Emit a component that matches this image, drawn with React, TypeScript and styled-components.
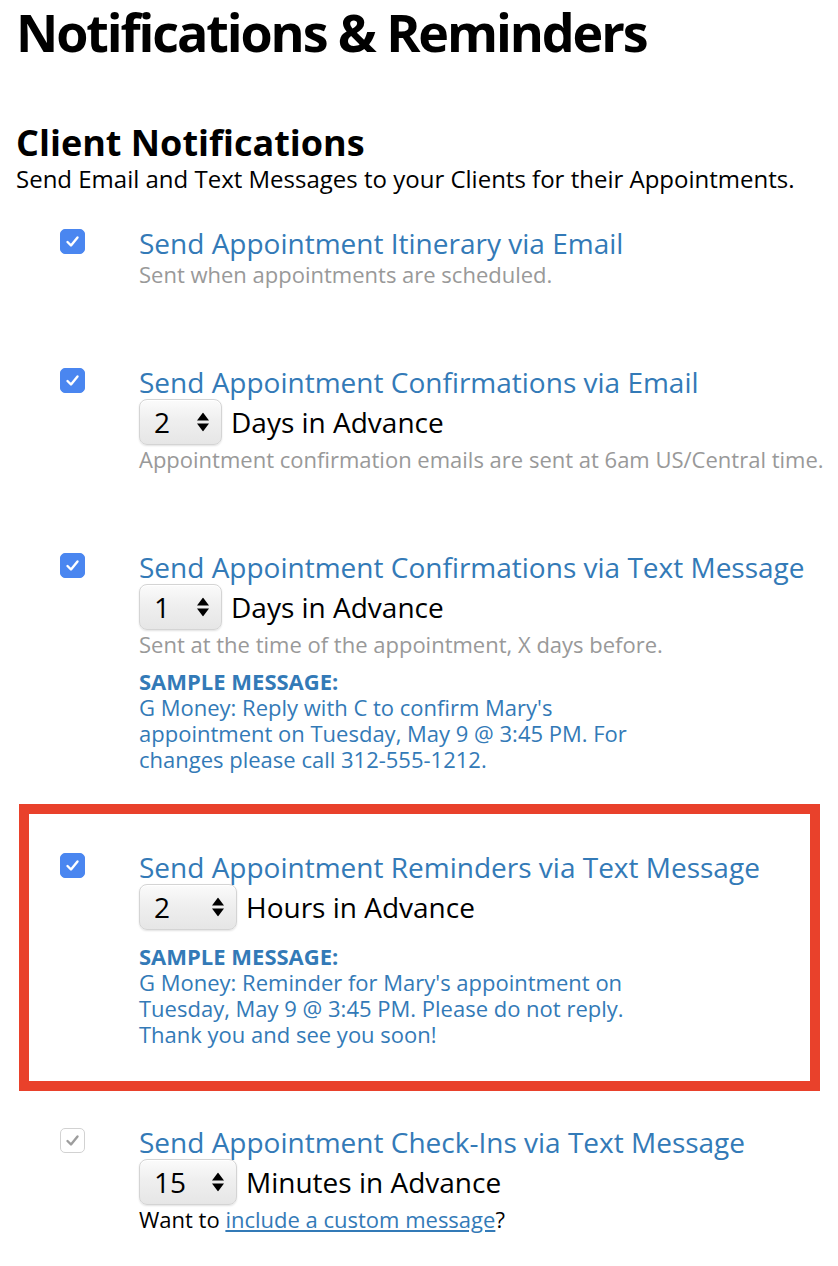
import React from 'react';
import styled, { createGlobalStyle } from 'styled-components';

const GlobalStyle = createGlobalStyle`
  * {
    box-sizing: border-box;
  }
  html,
  body {
    margin: 0;
    padding: 0;
    background: #fff;
    overflow: hidden;
  }
  body {
    font-family: 'Open Sans', 'Liberation Sans', sans-serif;
    color: #000;
  }
`;

const Page = styled.div`
  padding: 1px 16px 0;
`;

const Title = styled.h1`
  margin: 0;
  font-size: 52px;
  line-height: 62px;
  font-weight: 700;
  letter-spacing: -2.1px;
`;

const SectionTitle = styled.h2`
  margin: 60px 0 0;
  font-size: 36px;
  line-height: 40px;
  font-weight: 700;
`;

const SectionIntro = styled.p`
  margin: 0;
  font-size: 24px;
  line-height: 32px;
`;

const List = styled.div`
  display: flex;
  flex-direction: column;
`;

const Item = styled.div<{ $highlighted?: boolean }>`
  display: grid;
  grid-template-columns: 79px 1fr;
  padding: 38px 0 39px 44px;

  &:first-child {
    padding-top: 31px;
  }
  &:last-child {
    padding-bottom: 24px;
  }

  ${(props) =>
    props.$highlighted &&
    `
    border: 10px solid #e9412b;
    margin: -7px 2px -4px 3px;
    padding: 36px 0 34px 31px;
  `}
`;

const CheckBox = styled.span<{ $disabled?: boolean }>`
  display: flex;
  align-items: center;
  justify-content: center;
  width: 25px;
  height: 25px;
  margin-top: 3px;
  border-radius: 5px;
  background: ${(props) => (props.$disabled ? '#fff' : '#4a86f0')};
  border: 1px solid ${(props) => (props.$disabled ? '#d2d2d2' : '#4a86f0')};
  color: ${(props) => (props.$disabled ? '#9d9d9d' : '#fff')};
`;

const Body = styled.div`
  display: flex;
  flex-direction: column;
  min-width: 0;
`;

const ItemTitle = styled.div`
  font-size: 28px;
  line-height: 34px;
  color: #337ab7;
  white-space: nowrap;
`;

const Hint = styled.div`
  font-size: 22px;
  line-height: 28px;
  color: #999;
  white-space: nowrap;
`;

const OptionRow = styled.div`
  display: flex;
  align-items: center;
  gap: 9px;
  font-size: 28px;
  line-height: 46px;
`;

const SelectWrap = styled.span<{ $width: number }>`
  position: relative;
  display: inline-flex;
  width: ${(props) => props.$width}px;
  height: 46px;
`;

const Select = styled.select`
  appearance: none;
  width: 100%;
  height: 100%;
  margin: 0;
  padding: 0 0 0 14px;
  font-family: inherit;
  font-size: 28px;
  color: #000;
  border: 1px solid #d4d4d4;
  border-radius: 8px;
  background: linear-gradient(#fbfbfb 0%, #efefef 45%, #e6e6e6 100%);
  box-shadow: inset 0 1px 0 #fff, 0 1px 2px rgba(0, 0, 0, 0.12);
  outline: none;
`;

const Arrows = styled.svg`
  position: absolute;
  right: 13px;
  top: 50%;
  transform: translateY(-50%);
  pointer-events: none;
`;

const Sample = styled.div<{ $gap: number }>`
  margin-top: ${(props) => props.$gap}px;
  max-width: 510px;
  font-size: 22px;
  line-height: 26px;
  color: #337ab7;
`;

const SampleLabel = styled.div`
  font-weight: 700;
`;

const Note = styled.div`
  font-size: 22px;
  line-height: 28px;
  color: #000;
`;

const Link = styled.a`
  color: #337ab7;
  text-decoration: underline;
`;

const Check = ({ disabled }: { disabled?: boolean }) => (
  <CheckBox $disabled={disabled}>
    <svg width="17" height="17" viewBox="0 0 17 17">
      <polyline
        points="3.5 9 7 12.5 13.5 4.5"
        fill="none"
        stroke="currentColor"
        strokeWidth="2.4"
        strokeLinecap="round"
        strokeLinejoin="round"
      />
    </svg>
  </CheckBox>
);

const NumberSelect = ({
  value,
  options,
  width,
}: {
  value: number;
  options: number[];
  width: number;
}) => (
  <SelectWrap $width={width}>
    <Select defaultValue={value}>
      {options.map((o) => (
        <option key={o} value={o}>
          {o}
        </option>
      ))}
    </Select>
    <Arrows width="12" height="19" viewBox="0 0 12 19">
      <polygon points="6 0 12 8 0 8" fill="#000" />
      <polygon points="0 11 12 11 6 19" fill="#000" />
    </Arrows>
  </SelectWrap>
);

const days = [1, 2, 3, 4, 5, 6, 7];
const hours = [1, 2, 3, 4, 6, 8, 12, 24];
const minutes = [5, 10, 15, 30, 45];

const App = () => {
  return (
    <Page>
      <GlobalStyle />
      <Title>Notifications &amp; Reminders</Title>
      <SectionTitle>Client Notifications</SectionTitle>
      <SectionIntro>Send Email and Text Messages to your Clients for their Appointments.</SectionIntro>

      <List>
        <Item>
          <Check />
          <Body>
            <ItemTitle>Send Appointment Itinerary via Email</ItemTitle>
            <Hint>Sent when appointments are scheduled.</Hint>
          </Body>
        </Item>

        <Item>
          <Check />
          <Body>
            <ItemTitle>Send Appointment Confirmations via Email</ItemTitle>
            <OptionRow>
              <NumberSelect value={2} options={days} width={83} />
              Days in Advance
            </OptionRow>
            <Hint>Appointment confirmation emails are sent at 6am US/Central time.</Hint>
          </Body>
        </Item>

        <Item>
          <Check />
          <Body>
            <ItemTitle>Send Appointment Confirmations via Text Message</ItemTitle>
            <OptionRow>
              <NumberSelect value={1} options={days} width={83} />
              Days in Advance
            </OptionRow>
            <Hint>Sent at the time of the appointment, X days before.</Hint>
            <Sample $gap={10}>
              <SampleLabel>SAMPLE MESSAGE:</SampleLabel>
              G Money: Reply with C to confirm Mary's appointment on Tuesday, May 9 @ 3:45 PM. For
              changes please call 312-555-1212.
            </Sample>
          </Body>
        </Item>

        <Item $highlighted>
          <Check />
          <Body>
            <ItemTitle>Send Appointment Reminders via Text Message</ItemTitle>
            <OptionRow>
              <NumberSelect value={2} options={hours} width={98} />
              Hours in Advance
            </OptionRow>
            <Sample $gap={13}>
              <SampleLabel>SAMPLE MESSAGE:</SampleLabel>
              G Money: Reminder for Mary's appointment on Tuesday, May 9 @ 3:45 PM. Please do not
              reply. Thank you and see you soon!
            </Sample>
          </Body>
        </Item>

        <Item>
          <Check disabled />
          <Body>
            <ItemTitle>Send Appointment Check-Ins via Text Message</ItemTitle>
            <OptionRow>
              <NumberSelect value={15} options={minutes} width={98} />
              Minutes in Advance
            </OptionRow>
            <Note>
              Want to <Link href="#">include a custom message</Link>?
            </Note>
          </Body>
        </Item>
      </List>
    </Page>
  );
};

export default App;
